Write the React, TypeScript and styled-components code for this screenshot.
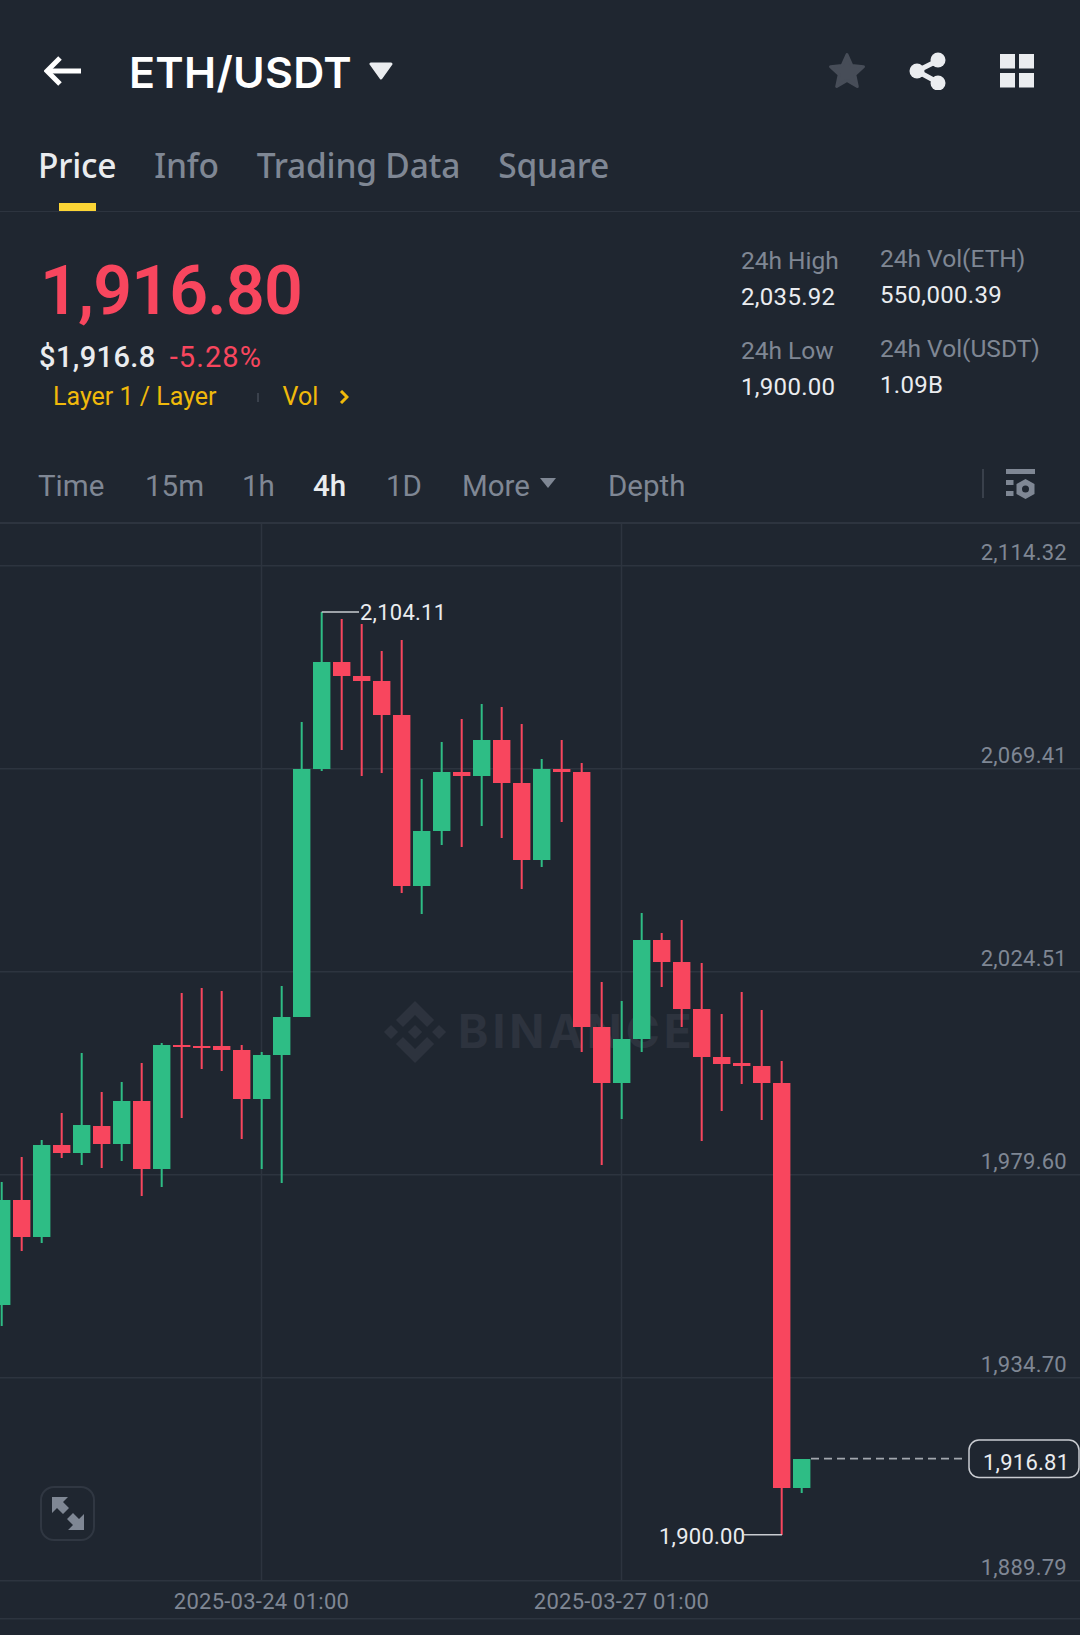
import React from "react";
import styled, { createGlobalStyle } from "styled-components";

const BG = "#1f2630";
const LINE = "#2d343f";
const RED = "#f8465e";
const GREEN = "#2ebd85";
const MUTED = "#7f8794";
const WHITE = "#eaecef";
const GOLD = "#f0b90b";

const GlobalStyle = createGlobalStyle`
  html, body {
    margin: 0;
    padding: 0;
    background: ${BG};
  }
  * {
    box-sizing: border-box;
  }
`;

const Page = styled.div`
  width: 1080px;
  height: 1635px;
  overflow: hidden;
  display: flex;
  flex-direction: column;
  background: ${BG};
  color: ${WHITE};
  font-family: Roboto, "Noto Sans", sans-serif;
`;

const Header = styled.header`
  height: 142px;
  display: flex;
  align-items: center;
  padding: 0 46px 0 44px;
`;

const Title = styled.h1`
  margin: 2px 17px 0 48px;
  font-family: Inter, sans-serif;
  font-size: 43px;
  line-height: 48px;
  font-weight: 600;
  letter-spacing: 0.3px;
  color: #fff;
`;

const HeaderActions = styled.div`
  margin-left: auto;
  display: flex;
  align-items: center;
`;

const ActionSlot = styled.div<{ $gap: number }>`
  display: flex;
  margin-left: ${(p) => p.$gap}px;
`;

const Tabs = styled.nav`
  height: 70px;
  display: flex;
  gap: 38px;
  padding-left: 38px;
  border-bottom: 1px solid ${LINE};
`;

const Tab = styled.div<{ $active?: boolean }>`
  position: relative;
  height: 69px;
  padding-top: 5px;
  font-family: "Noto Sans", sans-serif;
  font-size: 33.5px;
  line-height: 36px;
  font-weight: 500;
  letter-spacing: -0.2px;
  color: ${(p) => (p.$active ? WHITE : MUTED)};

  &::after {
    content: "";
    display: ${(p) => (p.$active ? "block" : "none")};
    position: absolute;
    left: 21px;
    bottom: 0;
    width: 37px;
    height: 8px;
    background: #fcd535;
  }
`;

const Summary = styled.section`
  height: 233px;
  display: flex;
  padding: 0 0 0 40px;
`;

const PriceBlock = styled.div`
  display: flex;
  flex-direction: column;
`;

const BigPrice = styled.div`
  margin-top: 39px;
  font-size: 68px;
  line-height: 80px;
  font-weight: 600;
  letter-spacing: -0.8px;
  color: ${RED};
`;

const SubRow = styled.div`
  margin: 8px 0 0 -1px;
  display: flex;
  gap: 14px;
  font-size: 29px;
  line-height: 36px;
  font-weight: 500;
  letter-spacing: 0.4px;
`;

const Change = styled.span`
  color: ${RED};
  font-weight: 400;
  letter-spacing: 1.1px;
`;

const TagRow = styled.div`
  margin: 7px 0 0 13px;
  display: flex;
  align-items: center;
  font-size: 25px;
  line-height: 30px;
  color: ${GOLD};
`;

const TagDivider = styled.i`
  width: 2px;
  height: 9px;
  margin: 0 24px 0 40px;
  background: #3a414c;
`;

const TagChevron = styled.svg`
  margin-left: 21px;
`;

const Stats = styled.div`
  margin-left: auto;
  display: flex;
`;

const StatColumn = styled.div<{ $width: number; $top: number }>`
  width: ${(p) => p.$width}px;
  padding-top: ${(p) => p.$top}px;
  display: flex;
  flex-direction: column;
  gap: 24px;
`;

const Stat = styled.div`
  display: flex;
  flex-direction: column;
  gap: 6px;
`;

const StatLabel = styled.span`
  font-size: 24.5px;
  line-height: 30px;
  color: ${MUTED};
`;

const StatValue = styled.span`
  font-size: 24px;
  line-height: 30px;
  font-weight: 400;
  letter-spacing: 0.3px;
  color: ${WHITE};
`;

const Timeframes = styled.div`
  height: 77px;
  display: flex;
  padding: 21px 45px 0 38px;
`;

const Interval = styled.span<{ $active?: boolean; $width: number }>`
  width: ${(p) => p.$width}px;
  font-size: 29.5px;
  line-height: 40px;
  font-weight: ${(p) => (p.$active ? 500 : 400)};
  color: ${(p) => (p.$active ? WHITE : MUTED)};
  display: flex;
  align-items: flex-start;
`;

const MoreCaret = styled.svg`
  margin: 11px 0 0 9px;
`;

const SettingsGroup = styled.div`
  margin: 3px 0 0 auto;
  display: flex;
  gap: 22px;
`;

const Divider = styled.i`
  width: 2px;
  height: 29px;
  background: #39404b;
`;

const ChartArea = styled.div`
  position: relative;
  flex: 1;
  border-top: 2px solid ${LINE};
`;

const ChartSvg = styled.svg`
  display: block;
  width: 1080px;
  height: 1111px;
`;

const ExpandButton = styled.button`
  position: absolute;
  left: 40px;
  top: 962px;
  width: 55px;
  height: 55px;
  padding: 0;
  display: flex;
  align-items: center;
  justify-content: center;
  background: transparent;
  border: 2px solid #303742;
  border-radius: 14px;
`;

// top, bottom are the body; high, low the wick, all in page pixels
type Candle = [up: 0 | 1, high: number, low: number, top: number, bottom: number];

const candles: Candle[] = [
  [1, 1182, 1326, 1200, 1305],
  [0, 1157, 1251, 1200, 1237],
  [1, 1140, 1243, 1145, 1237],
  [0, 1113, 1158, 1145, 1153],
  [1, 1053, 1165, 1125, 1153],
  [0, 1092, 1168, 1126, 1144],
  [1, 1082, 1161, 1101, 1144],
  [0, 1063, 1196, 1101, 1169],
  [1, 1043, 1187, 1045, 1169],
  [0, 993, 1118, 1045, 1047],
  [0, 988, 1069, 1046, 1048],
  [0, 991, 1071, 1046, 1050],
  [0, 1045, 1139, 1050, 1099],
  [1, 1052, 1169, 1055, 1099],
  [1, 986, 1183, 1017, 1055],
  [1, 722, 1017, 769, 1017],
  [1, 612, 771, 662, 769],
  [0, 619, 750, 662, 676],
  [0, 624, 776, 676, 681],
  [0, 651, 773, 681, 715],
  [0, 640, 893, 715, 886],
  [1, 779, 914, 831, 886],
  [1, 742, 845, 772, 831],
  [0, 719, 847, 772, 776],
  [1, 704, 826, 740, 776],
  [0, 707, 838, 740, 783],
  [0, 724, 889, 783, 860],
  [1, 759, 867, 769, 860],
  [0, 740, 822, 769, 772],
  [0, 763, 1052, 772, 1027],
  [0, 982, 1165, 1027, 1083],
  [1, 1001, 1119, 1039, 1083],
  [1, 913, 1052, 940, 1039],
  [0, 933, 987, 940, 962],
  [0, 920, 1027, 962, 1009],
  [0, 963, 1141, 1009, 1057],
  [0, 1014, 1111, 1057, 1064],
  [0, 992, 1084, 1063, 1066],
  [0, 1010, 1120, 1066, 1083],
  [0, 1061, 1535, 1083, 1488],
  [1, 1459, 1493, 1459, 1488],
];

const gridRows = [
  { y: 565, label: "2,114.32", base: 560 },
  { y: 768, label: "2,069.41", base: 763 },
  { y: 971, label: "2,024.51", base: 966 },
  { y: 1174, label: "1,979.60", base: 1169 },
  { y: 1377, label: "1,934.70", base: 1372 },
  { y: 1580, label: "1,889.79", base: 1575 },
];

const gridCols = [
  { x: 261.5, label: "2025-03-24 01:00" },
  { x: 621.5, label: "2025-03-27 01:00" },
];

const BackIcon = () => (
  <svg width="37" height="30" viewBox="44 56 37 30" fill="none" stroke="#fff" strokeWidth="5">
    <path d="M81 71H48" />
    <path d="M60 58 47 71l13 13" />
  </svg>
);

const TitleCaret = () => (
  <svg width="24" height="18" viewBox="0 0 24 18">
    <path d="M2 2h20L12 16z" fill={WHITE} stroke={WHITE} strokeWidth="3" strokeLinejoin="round" />
  </svg>
);

const StarIcon = () => (
  <svg width="38" height="38" viewBox="0 0 38 38">
    <path
      d="M19 2.500l4.900 11 11.600 1.200-8.700 7.900 2.500 11.900L19 28.400 8.700 34.500l2.500-11.900-8.700-7.900 11.600-1.200z"
      fill="#474d58"
      stroke="#474d58"
      strokeWidth="3"
      strokeLinejoin="round"
    />
  </svg>
);

const ShareIcon = () => (
  <svg width="37" height="38" viewBox="0 0 37 38" fill={WHITE}>
    <path d="M30 8 8 19l22 12" fill="none" stroke={WHITE} strokeWidth="5" />
    <circle cx="29" cy="8" r="7.500" />
    <circle cx="8" cy="19" r="7.500" />
    <circle cx="29" cy="31" r="7.500" />
  </svg>
);

const GridIcon = () => (
  <svg width="34" height="34" viewBox="0 0 34 34" fill={WHITE}>
    <rect x="0" y="0" width="15" height="14.500" />
    <rect x="19" y="0" width="15" height="14.500" />
    <rect x="0" y="19" width="15" height="14.500" />
    <rect x="19" y="19" width="15" height="14.500" />
  </svg>
);

const SettingsIcon = () => (
  <svg width="29" height="30" viewBox="0 0 29 30" fill={MUTED}>
    <rect x="0" y="0" width="29" height="5" />
    <rect x="0" y="11" width="7.500" height="5" />
    <rect x="0" y="22" width="7.500" height="5" />
    <path
      fillRule="evenodd"
      d="M19.500 10l9 5v10l-9 5-9-5V15zM19.500 16.500a3.500 3.500 0 1 0 0 7 3.500 3.500 0 0 0 0-7z"
    />
  </svg>
);

const ExpandIcon = () => (
  <svg width="32" height="33" viewBox="0 0 32 33" fill={MUTED}>
    <path d="M0 0h16L11 5l6 6-6 6-6-6-5 5z" />
    <path d="M32 33H16l5-5-6-6 6-6 6 6 5-5z" />
  </svg>
);

const Watermark = () => (
  <g>
    <g transform="translate(384 1001) scale(0.49)" fill="#2d333e">
      <path d="M38.730 53.200l24.590-24.580 24.600 24.600 14.300-14.310L63.320 0 24.430 38.900zM0 63.310l14.300-14.310 14.310 14.310-14.310 14.300zM38.730 73.410l24.590 24.590 24.600-24.600 14.310 14.290-38.900 38.910-38.910-38.880-.02-.02zM98.010 63.320l14.300-14.310 14.300 14.300-14.300 14.310z" />
      <path d="M77.830 63.300L63.320 48.780 52.590 59.510l-1.240 1.230-2.540 2.540 14.510 14.500 14.510-14.470z" />
    </g>
    <text
      x="458"
      y="1048"
      fontFamily="Inter, sans-serif"
      fontWeight="700"
      fontSize="46"
      letterSpacing="4"
      fill="#2d333e"
    >
      BINANCE
    </text>
  </g>
);

const Chart = () => (
  <ChartSvg viewBox="0 524 1080 1111" fontFamily="Roboto, sans-serif" fontSize="22" letterSpacing="0.25">
    {gridRows.map((row) => (
      <rect key={row.y} x="0" y={row.y} width="1080" height="1.500" fill={LINE} />
    ))}
    <rect x="0" y="1618" width="1080" height="1.500" fill={LINE} />
    {gridCols.map((col) => (
      <rect key={col.x} x={col.x - 0.75} y="524" width="1.500" height="1056" fill={LINE} />
    ))}
    <Watermark />
    {candles.map(([up, high, low, top, bottom], i) => {
      const cx = 1.7 + i * 20;
      const color = up ? GREEN : RED;
      return (
        <g key={i} fill={color}>
          <rect x={cx - 1} y={high} width="2" height={low - high} />
          <rect x={cx - 8.7} y={top} width="17.400" height={Math.max(bottom - top, 2)} />
        </g>
      );
    })}
    {gridRows.map((row) => (
      <text key={row.label} x="1067" y={row.base} textAnchor="end" fill={MUTED}>
        {row.label}
      </text>
    ))}
    {gridCols.map((col) => (
      <text key={col.label} x={col.x} y="1608.500" textAnchor="middle" fill={MUTED}>
        {col.label}
      </text>
    ))}
    <path d="M321.700 612H359" stroke="#c9ccd1" strokeWidth="1.500" fill="none" />
    <text x="360" y="620" fill={WHITE}>2,104.11</text>
    <path d="M744 1534.700H782" stroke="#c9ccd1" strokeWidth="1.500" fill="none" />
    <text x="659" y="1543.500" fill={WHITE}>1,900.00</text>
    <path d="M811 1458.700H966" stroke="#a2a7ae" strokeWidth="1.800" strokeDasharray="8 5" fill="none" />
    <rect x="969" y="1440" width="110" height="37.500" rx="10" fill={BG} stroke="#c9ccd1" strokeWidth="1.500" />
    <text x="983" y="1469.500" fill={WHITE}>1,916.81</text>
  </ChartSvg>
);

export default function App() {
  return (
    <Page>
      <GlobalStyle />
      <Header>
        <BackIcon />
        <Title>ETH/USDT</Title>
        <TitleCaret />
        <HeaderActions>
          <StarIcon />
          <ActionSlot $gap={43}>
            <ShareIcon />
          </ActionSlot>
          <ActionSlot $gap={54}>
            <GridIcon />
          </ActionSlot>
        </HeaderActions>
      </Header>
      <Tabs>
        <Tab $active>Price</Tab>
        <Tab>Info</Tab>
        <Tab>Trading Data</Tab>
        <Tab>Square</Tab>
      </Tabs>
      <Summary>
        <PriceBlock>
          <BigPrice>1,916.80</BigPrice>
          <SubRow>
            <span>$1,916.8</span>
            <Change>-5.28%</Change>
          </SubRow>
          <TagRow>
            <span>Layer 1 / Layer</span>
            <TagDivider />
            <span>Vol</span>
            <TagChevron width="10" height="14" viewBox="0 0 10 14" fill="none" stroke={GOLD} strokeWidth="3">
              <path d="M2 1l6 6-6 6" />
            </TagChevron>
          </TagRow>
        </PriceBlock>
        <Stats>
          <StatColumn $width={139} $top={34}>
            <Stat>
              <StatLabel>24h High</StatLabel>
              <StatValue>2,035.92</StatValue>
            </Stat>
            <Stat>
              <StatLabel>24h Low</StatLabel>
              <StatValue>1,900.00</StatValue>
            </Stat>
          </StatColumn>
          <StatColumn $width={200} $top={32}>
            <Stat>
              <StatLabel>24h Vol(ETH)</StatLabel>
              <StatValue>550,000.39</StatValue>
            </Stat>
            <Stat>
              <StatLabel>24h Vol(USDT)</StatLabel>
              <StatValue>1.09B</StatValue>
            </Stat>
          </StatColumn>
        </Stats>
      </Summary>
      <Timeframes>
        <Interval $width={107}>Time</Interval>
        <Interval $width={97}>15m</Interval>
        <Interval $width={71}>1h</Interval>
        <Interval $width={73} $active>4h</Interval>
        <Interval $width={76}>1D</Interval>
        <Interval $width={146}>
          More
          <MoreCaret width="18" height="12" viewBox="0 0 18 12">
            <path d="M1 1h16L9 11z" fill={MUTED} />
          </MoreCaret>
        </Interval>
        <Interval $width={90}>Depth</Interval>
        <SettingsGroup>
          <Divider />
          <SettingsIcon />
        </SettingsGroup>
      </Timeframes>
      <ChartArea>
        <Chart />
        <ExpandButton aria-label="Expand chart">
          <ExpandIcon />
        </ExpandButton>
      </ChartArea>
    </Page>
  );
}
